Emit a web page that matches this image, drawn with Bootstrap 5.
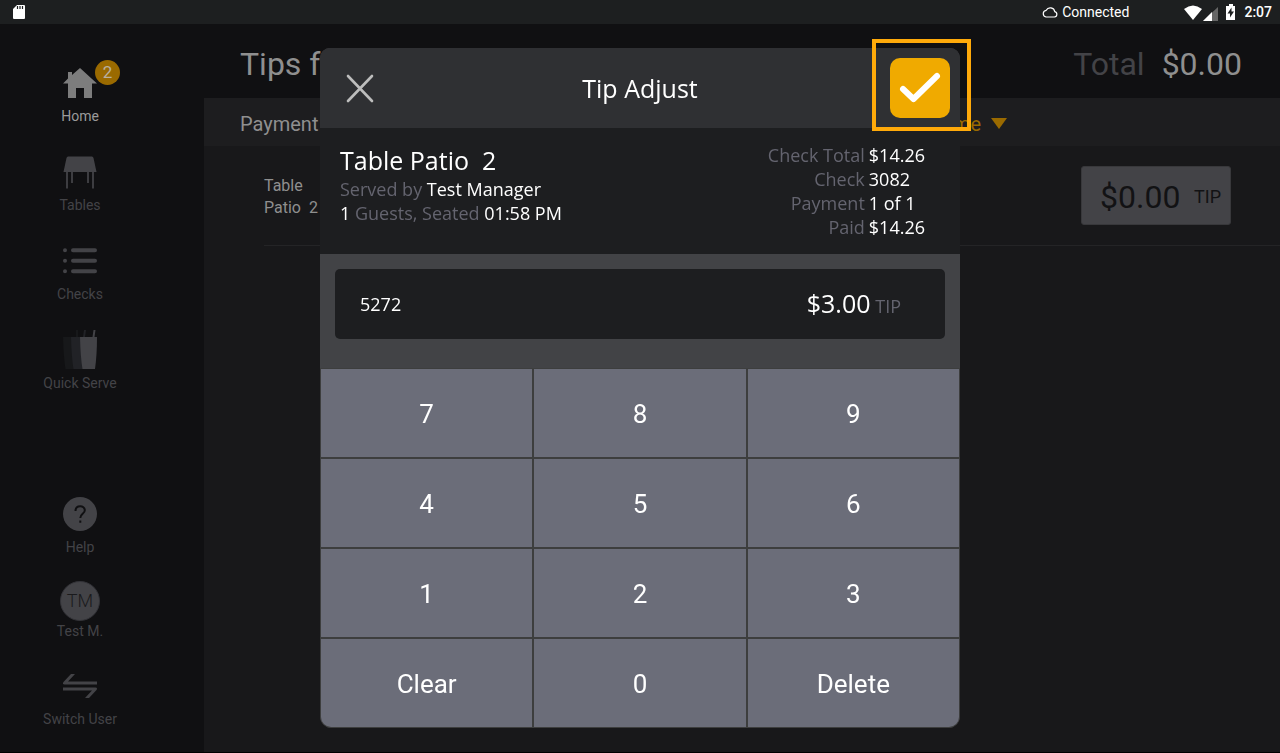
<!DOCTYPE html>
<html lang="en">
<head>
<meta charset="utf-8">
<meta name="viewport" content="width=device-width, initial-scale=1">
<title>Tip Adjust</title>
<link href="https://cdn.jsdelivr.net/npm/bootstrap@5.3.0/dist/css/bootstrap.min.css" rel="stylesheet">
<style>
  body { background: #18181a; font-family: Roboto, sans-serif; color: #8f8f8f; }
  button { font-family: inherit; }
  .shell { min-height: 100vh; border-bottom: 1px solid #000; }
  .status { background: #1d1f20; color: #fff; height: 24px; font-size: 14px; line-height: 24px; padding: 0 8px 0 12px; }
  .side { background: #101012; width: 204px; padding: 38px 44px 23px 0; }
  .side ul { gap: 25px; }
  .side ul.lower { gap: 24px; }
  .side a { color: #434347; font-size: 14px; line-height: 20px; gap: 4px; }
  .side a.active { color: #9b9b9b; }
  .side a.user { gap: 0; }
  .ico { width: 40px; height: 40px; }
  .count { background: #9a6a00; color: #b9b0a0; width: 25px; height: 25px; line-height: 25px; font-size: 17px; left: 35px; top: -2px; }
  .avatar { background: #434347; border: 1px solid #333338; color: #1a1a1c; font-size: 18px; font-weight: 300; }
  .topbar { background: #101012; height: 74px; padding: 5px 38px 0 36px; font-size: 32px; gap: 17px; }
  .topbar h1 { font-size: 32px; font-weight: 400; line-height: 48px; }
  .dim { color: #434347; }
  .heads { background: #1d1d1f; height: 48px; padding: 3px 273px 0 36px; font-size: 20px; }
  .sorter { color: #9a6a00; gap: 10px; }
  .pay-row { margin-left: 60px; padding: 20px 49px 20px 0; border-bottom: 1px solid #242426; font-size: 16px; line-height: 22px; }
  .pay-row div { padding-top: 2px; }
  .tip-btn { background: #434347; border: 1px solid #38383b; color: #121214; width: 150px; height: 59px; font-size: 32px; border-radius: 3px; padding: 3px 9px 0 18px; }
  .tip-btn small { font-size: 18px; }
  .pad-dialog { width: 640px; max-width: 100%; margin: 48px auto 24px; font-family: "Open Sans", sans-serif; }
  .pad-dialog .modal-content { border: 0; border-radius: 10px 10px 12px 12px; background: #424346; color: #fff; }
  .pad-head { background: #2f3033; height: 80px; border-radius: 10px 10px 0 0; padding: 0 10px; }
  .pad-head h2 { font-size: 25px; font-weight: 400; line-height: 32px; }
  .close-btn, .ok-btn { width: 60px; height: 60px; }
  .ok-btn { background: #f0aa00; border-radius: 10px; }
  .marker { inset: -19px -21px -13px -18px; border: 4px solid #ffaa0a; pointer-events: none; }
  .info { background: #1d1e20; padding: 15px 35px 15px 20px; font-size: 18px; line-height: 24px; }
  .info h3 { font-size: 25px; font-weight: 400; line-height: 34px; }
  .quiet { color: #64646f; }
  .facts { grid-template-columns: auto auto; column-gap: 4px; }
  .facts dt { font-weight: 400; text-align: right; }
  .entry { background: #1d1e20; margin: 15px 15px 29px; height: 70px; border-radius: 5px; padding: 0 44px 0 25px; font-size: 18px; }
  .entry strong { font-size: 25px; font-weight: 400; }
  .keys { background: #3d3e3e; grid-template-columns: repeat(3, 1fr); gap: 2px; padding: 1px; border-radius: 0 0 12px 12px; font-family: Roboto, sans-serif; }
  .key { background: #6b6d79; color: #fff; border: 0; height: 88px; padding-top: 3px; font-size: 26px; }
  .key:nth-last-child(3) { border-radius: 0 0 0 10px; }
  .key:last-child { border-radius: 0 0 10px 0; }
</style>
</head>
<body>
<div class="shell d-flex flex-column">
  <div class="status d-flex align-items-center">
    <svg width="14" height="16" viewBox="0 0 14 16" aria-hidden="true"><path d="M5 1h7q1 0 1 1v12q0 1-1 1H2q-1 0-1-1V5z" fill="#fff"/><path d="M5.500 2v3M8 2v3M10.500 2v3" stroke="#1d1f20" stroke-width="1.200"/></svg>
    <svg class="ms-auto" width="16" height="12" viewBox="0 0 16 12" aria-hidden="true"><path d="M4 11h8.500a2.700 2.700 0 0 0 .3-5.300A4.600 4.600 0 0 0 4.200 4.300 3.400 3.400 0 0 0 4 11z" fill="none" stroke="#fff" stroke-width="1.200"/></svg>
    <span class="ms-1">Connected</span>
    <svg class="ms-5" width="67" height="18" viewBox="0 0 67 18" aria-hidden="true"><path d="M7 6Q16-1 25 6L16 17z" fill="#fff"/><path d="M26 18L41 4v14z" fill="#666"/><path d="M26 18l9-9v9z" fill="#fff"/><path d="M49 3h3V1h4v2h2v14h-9z" fill="#fff"/><path d="M54.500 4.500l-4 6h2.500v4l4-6h-2.500z" fill="#1d1f20"/></svg>
    <span class="fw-medium">2:07</span>
  </div>
  <div class="d-flex flex-grow-1">
    <nav class="side d-flex flex-column justify-content-between flex-shrink-0">
      <ul class="list-unstyled d-flex flex-column mb-0">
        <li><a href="#" class="active d-flex flex-column align-items-center text-decoration-none">
          <span class="position-relative ico">
            <svg class="ico d-block" viewBox="0 0 40 40" aria-hidden="true"><path d="M3 21.500L8 16.500V10h4v3L20 6l17 15.500h-5V36h-8V26h-8v10H8V21.500z" fill="#7d7d7d"/></svg>
            <span class="count position-absolute rounded-circle text-center">2</span>
          </span>Home</a></li>
        <li><a href="#" class="d-flex flex-column align-items-center text-decoration-none">
          <svg class="ico" viewBox="0 0 40 40" aria-hidden="true"><path d="M8 5.500h24q1 0 1.500 1.500L36.500 21H3.500L6.500 7Q7 5.500 8 5.500z" fill="#434347"/><path d="M7 20v17.500M12 20v12M28 20v12M33 20v17.500" stroke="#434347" stroke-width="1.800"/></svg>Tables</a></li>
        <li><a href="#" class="d-flex flex-column align-items-center text-decoration-none">
          <svg class="ico" viewBox="0 0 40 40" aria-hidden="true"><path d="M13 10.200h22M13 20.700h22M13 31.200h22M5 10.200h0M5 20.700h0M5 31.200h0" stroke="#434347" stroke-width="4" stroke-linecap="round"/></svg>Checks</a></li>
        <li><a href="#" class="d-flex flex-column align-items-center text-decoration-none">
          <svg class="ico" viewBox="0 0 40 40" aria-hidden="true"><path fill="#17181a" d="M3 8h17l-2 32H5.500Q3.500 28 3 8zM16 1h2v7h-2z"/><path fill="#212226" d="M11 8h17l-2 32H13.500Q11.500 28 11 8zM24 1h2l-1 7h-2z"/><path fill="#434347" d="M20 8h17q0 18-2 32H22.500Q20.500 28 20 8zM33.500 1h2l-1 7h-2z"/></svg>Quick Serve</a></li>
      </ul>
      <ul class="lower list-unstyled d-flex flex-column mb-0">
        <li><a href="#" class="d-flex flex-column align-items-center text-decoration-none">
          <svg class="ico" viewBox="0 0 40 40" aria-hidden="true"><circle cx="20" cy="21" r="17" fill="#434347"/><path d="M15.500 18c0-6.500 9.300-6 9.300-.8 0 3.600-4.500 3.800-4.500 7.800M20.300 27.500v2.200" fill="none" stroke="#101012" stroke-width="2"/></svg>Help</a></li>
        <li><a href="#" class="user d-flex flex-column align-items-center text-decoration-none">
          <span class="ico avatar rounded-circle d-flex align-items-center justify-content-center">TM</span>Test M.</a></li>
        <li><a href="#" class="d-flex flex-column align-items-center text-decoration-none">
          <svg class="ico" viewBox="0 0 40 40" aria-hidden="true"><path d="M37 16.500V19.500H4.500Q2 19 3.500 17L11 9h4L8 16.500zM3 22.500V25.500H32L25 33h4L36.500 25Q38 23 35.500 22.500z" fill="#434347"/></svg>Switch User</a></li>
      </ul>
    </nav>
    <main class="flex-grow-1">
      <header class="topbar d-flex align-items-center">
        <h1 class="mb-0 me-auto">Tips for</h1>
        <span class="dim">Total</span><span>$0.00</span>
      </header>
      <div class="heads d-flex align-items-center justify-content-between">
        <span>Payment</span>
        <span class="sorter d-flex align-items-center">Time
          <svg width="16" height="12" viewBox="0 0 16 12" aria-hidden="true"><path d="M0 0h16L8 11z" fill="#9a6a00"/></svg></span>
      </div>
      <div class="pay-row d-flex align-items-center justify-content-between">
        <div>Table<br>Patio&nbsp; 2</div>
        <button type="button" class="tip-btn d-flex align-items-center justify-content-between lh-1">$0.00 <small>TIP</small></button>
      </div>
    </main>
  </div>
</div>

<div class="modal d-block" role="dialog" aria-labelledby="padTitle">
  <div class="modal-dialog pad-dialog">
    <div class="modal-content">
      <div class="pad-head d-flex align-items-center justify-content-between">
        <button type="button" class="close-btn btn p-0 border-0" aria-label="Close"><svg width="30" height="30" viewBox="0 0 30 30"><path d="M3 3l24 25M27 3L3 28" stroke="#bdbdbd" stroke-width="2.600" stroke-linecap="round"/></svg></button>
        <h2 class="mb-0" id="padTitle">Tip Adjust</h2>
        <div class="position-relative">
          <button type="button" class="ok-btn btn p-0 border-0 d-block" aria-label="Confirm"><svg class="d-block" width="60" height="60" viewBox="0 0 60 60"><path d="M13 31l10.500 10L47 18" fill="none" stroke="#fff" stroke-width="6" stroke-linecap="round" stroke-linejoin="round"/></svg></button>
          <div class="marker position-absolute"></div>
        </div>
      </div>
      <div class="info d-flex justify-content-between">
        <div>
          <h3 class="mb-0">Table Patio&nbsp; 2</h3>
          <div><span class="quiet">Served by</span> Test Manager</div>
          <div>1 <span class="quiet">Guests, Seated</span> 01:58 PM</div>
        </div>
        <dl class="facts d-grid mb-0">
          <dt class="quiet">Check Total</dt><dd class="mb-0">$14.26</dd>
          <dt class="quiet">Check</dt><dd class="mb-0">3082</dd>
          <dt class="quiet">Payment</dt><dd class="mb-0">1 of 1</dd>
          <dt class="quiet">Paid</dt><dd class="mb-0">$14.26</dd>
        </dl>
      </div>
      <div class="entry d-flex align-items-center justify-content-between">
        <span>5272</span>
        <span><strong>$3.00</strong> <span class="quiet">TIP</span></span>
      </div>
      <div class="keys d-grid">
        <button type="button" class="key">7</button><button type="button" class="key">8</button><button type="button" class="key">9</button>
        <button type="button" class="key">4</button><button type="button" class="key">5</button><button type="button" class="key">6</button>
        <button type="button" class="key">1</button><button type="button" class="key">2</button><button type="button" class="key">3</button>
        <button type="button" class="key">Clear</button><button type="button" class="key">0</button><button type="button" class="key">Delete</button>
      </div>
    </div>
  </div>
</div>
<script src="https://cdn.jsdelivr.net/npm/bootstrap@5.3.0/dist/js/bootstrap.bundle.min.js"></script>
</body>
</html>
